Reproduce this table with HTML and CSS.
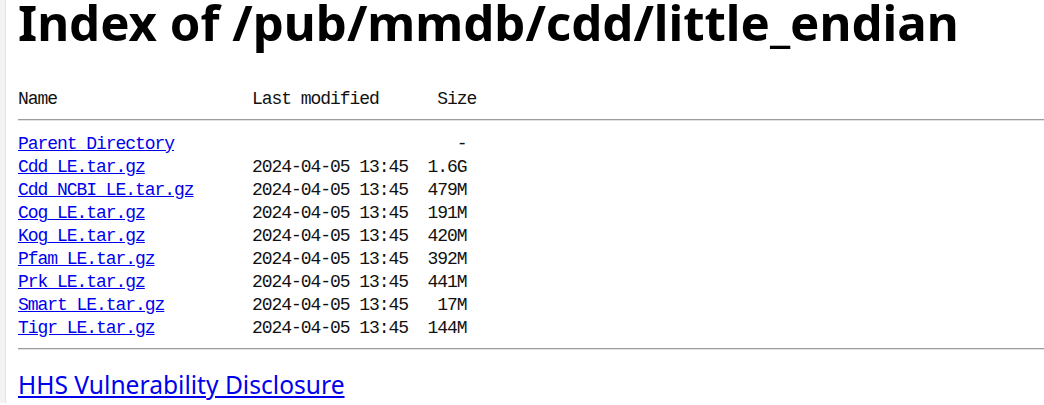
FILE: index.html
```html
<!DOCTYPE html>
<html>
<head>
<meta charset="utf-8">
<title>Index of /pub/mmdb/cdd/little_endian</title>
<link rel="stylesheet" href="styles.css">
</head>
<body>
<div class="page">
<h1 class="title">Index of /pub/mmdb/cdd/little_endian</h1>
<pre class="listing">Name                    Last modified      Size<hr class="rule"><a class="link" href="../">Parent Directory</a>                             -
<a class="link" href="Cdd_LE.tar.gz">Cdd_LE.tar.gz</a>           2024-04-05 13:45  1.6G
<a class="link" href="Cdd_NCBI_LE.tar.gz">Cdd_NCBI_LE.tar.gz</a>      2024-04-05 13:45  479M
<a class="link" href="Cog_LE.tar.gz">Cog_LE.tar.gz</a>           2024-04-05 13:45  191M
<a class="link" href="Kog_LE.tar.gz">Kog_LE.tar.gz</a>           2024-04-05 13:45  420M
<a class="link" href="Pfam_LE.tar.gz">Pfam_LE.tar.gz</a>          2024-04-05 13:45  392M
<a class="link" href="Prk_LE.tar.gz">Prk_LE.tar.gz</a>           2024-04-05 13:45  441M
<a class="link" href="Smart_LE.tar.gz">Smart_LE.tar.gz</a>         2024-04-05 13:45   17M
<a class="link" href="Tigr_LE.tar.gz">Tigr_LE.tar.gz</a>          2024-04-05 13:45  144M
<hr class="rule"></pre>
<a class="link footer-link" href="#">HHS Vulnerability Disclosure</a>
</div>
</body>
</html>
```
FILE: styles.css
```css
html, body {
  margin: 0;
  padding: 0;
  background: #ffffff;
}

body {
  overflow: hidden;
}

.page {
  min-height: 100vh;
  box-sizing: border-box;
  border-left: 5px solid #f3f3f3;
  box-shadow: inset 1px 0 0 #e4e4e4;
  padding-left: 13px;
  font-family: "Noto Sans", "Liberation Sans", sans-serif;
  color: #000;
}

.title {
  margin: 0;
  padding-top: 0;
  font-family: "Noto Sans", "Liberation Sans", sans-serif;
  font-weight: 700;
  font-size: 49.2px;
  line-height: 48px;
  margin-top: -2px;
  height: 76px;
}

.listing {
  margin: 14px 0 0 0;
  font-family: "Liberation Mono", monospace;
  font-size: 18px;
  letter-spacing: -1.05px;
  line-height: 23px;
  color: #111;
  white-space: pre;
}

.rule {
  margin: 8px 0 12px 0;
  height: 0;
  border: 0;
  border-top: 1px solid #9c9c9c;
  border-bottom: 1px solid #e2e2e2;
}

.link {
  color: #0000ee;
  text-decoration: underline;
}

.footer-link {
  display: inline-block;
  margin-top: 8px;
  font-family: "Noto Sans", "Liberation Sans", sans-serif;
  font-size: 24.6px;
  line-height: 30px;
}
```
